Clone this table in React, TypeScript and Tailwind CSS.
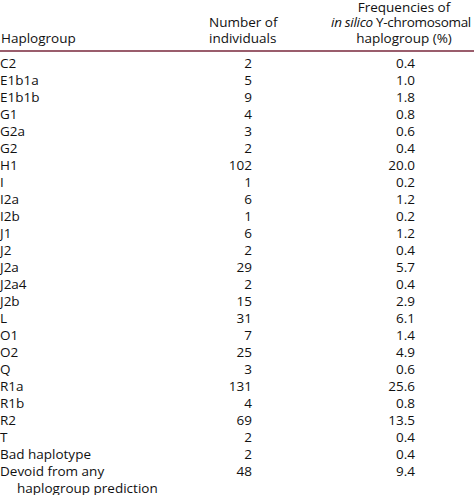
const ROWS: [string, string, string][] = [
  ["C2", "2", "0.4"],
  ["E1b1a", "5", "1.0"],
  ["E1b1b", "9", "1.8"],
  ["G1", "4", "0.8"],
  ["G2a", "3", "0.6"],
  ["G2", "2", "0.4"],
  ["H1", "102", "20.0"],
  ["I", "1", "0.2"],
  ["I2a", "6", "1.2"],
  ["I2b", "1", "0.2"],
  ["J1", "6", "1.2"],
  ["J2", "2", "0.4"],
  ["J2a", "29", "5.7"],
  ["J2a4", "2", "0.4"],
  ["J2b", "15", "2.9"],
  ["L", "31", "6.1"],
  ["O1", "7", "1.4"],
  ["O2", "25", "4.9"],
  ["Q", "3", "0.6"],
  ["R1a", "131", "25.6"],
  ["R1b", "4", "0.8"],
  ["R2", "69", "13.5"],
  ["T", "2", "0.4"],
  ["Bad haplotype", "2", "0.4"],
  ["Devoid from any", "48", "9.4"],
];

export default function App() {
  return (
    <div
      className="w-[474px] h-[495px] overflow-hidden bg-white text-[13.5px] text-[#111]"
      style={{ fontFamily: '"Open Sans", "Noto Sans", sans-serif' }}
    >
      {/* header */}
      <div className="flex h-[50px] items-end pb-[4px] leading-[15.5px]">
        <div className="w-[209px] shrink-0 pl-[1px]">Haplogroup</div>
        <div className="w-[100px] shrink-0">
          <div>Number of</div>
          <div>individuals</div>
        </div>
        <div className="w-[192px] shrink-0 -ml-[4px] text-center whitespace-nowrap">
          <div className="pl-[6px]">Frequencies of</div>
          <div className="tracking-[-0.3px]">
            <span className="italic">in silico</span> Y-chromosomal
          </div>
          <div className="pl-[6px]">haplogroup (%)</div>
        </div>
      </div>
      <div className="h-[2px] bg-[#9a5d6c]" />

      {/* body */}
      <div className="pt-[3px]">
        {ROWS.map(([name, count, freq]) => (
          <div key={name} className="flex h-[17px] items-center leading-[17px]">
            <div className="w-[200px] shrink-0 whitespace-nowrap">{name}</div>
            <div className="w-[52px] shrink-0 text-right">{count}</div>
            <div className="w-[163px] shrink-0 text-right">{freq}</div>
          </div>
        ))}
        <div className="h-[17px] leading-[17px] pl-[17px] whitespace-nowrap">haplogroup prediction</div>
      </div>
    </div>
  );
}
